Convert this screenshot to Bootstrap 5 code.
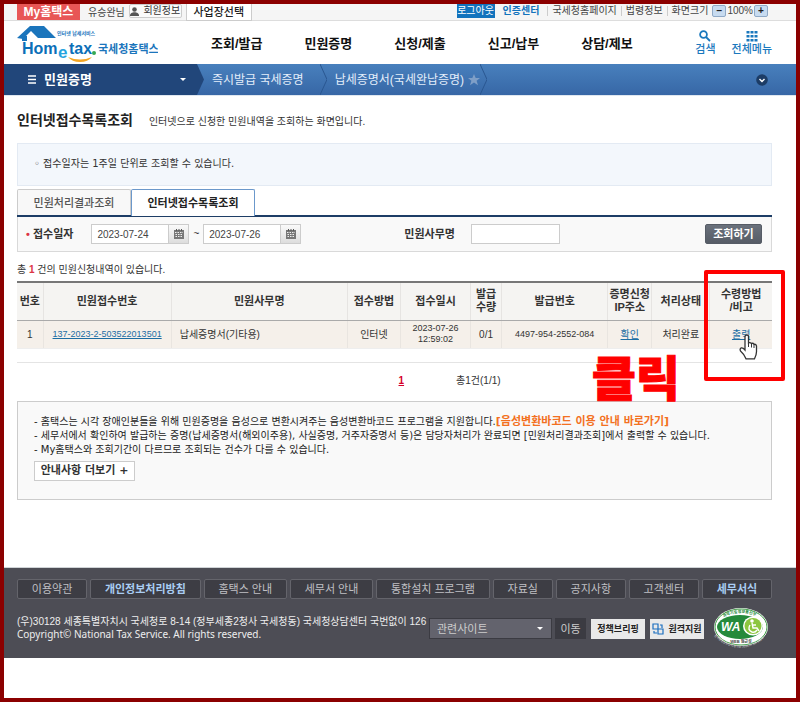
<!DOCTYPE html>
<html lang="ko">
<head>
<meta charset="utf-8">
<meta name="viewport" content="width=device-width, initial-scale=1">
<title>인터넷접수목록조회 - 국세청홈택스</title>
<link href="https://cdn.jsdelivr.net/npm/bootstrap@5.3.0/dist/css/bootstrap.min.css" rel="stylesheet">
<style>
body{font-family:"Liberation Sans","Noto Sans CJK KR",sans-serif;font-size:10px;line-height:14px;color:#333;border:4px solid #8b0000;min-height:100vh;background:#fff}
a{text-decoration:none;color:inherit}
button,input,select{font-family:inherit}
.gutter{padding-left:13px;padding-right:24px}
.topbar{background:#f5f5f5;border-bottom:1px solid #ddd;height:17px;color:#444}
.my-tab{background:#e85656;color:#fff;font-size:12px;font-weight:700;width:63px;text-align:center;line-height:16px}
.info-btn{border:1px solid #ccc;border-radius:2px;background:#fafafa;line-height:12px;width:53px;height:14px;color:#333}
.biz-btn{border:1px solid #ccc;border-top:0;background:#fff;font-size:11px;font-weight:500;width:66px;height:17px;line-height:14px;color:#222}
.logout{background:#1273bd;color:#fff;width:38px;height:14px;line-height:14px}
.cert-link{color:#1273bd;font-weight:700}
.sep{border-left:1px solid #ccc;padding-left:4px;line-height:10px}
.zoom-btn{border:1px solid #8fa9c6;border-radius:2px;background:#c7dbf0;width:14px;height:12px;line-height:8px;color:#222;font-weight:700}
.zoom-value{padding:0 1px}
.masthead{height:43px}
.gnb{gap:42px;font-size:13px;font-weight:700;color:#111;margin-left:53px;padding-top:2px}
.tool-link{color:#1a78bd;font-size:11px;font-weight:500}
.crumbs{background:linear-gradient(#4880bd,#3767a6);height:31px;color:#e4eefa;font-size:12px;border-bottom:1px solid #dfe7f0;box-sizing:content-box}
.crumb-main{background:#21467a;width:193px;color:#fff}
.crumb-main button,.crumb-main button:hover{color:#fff;font-size:13px;font-weight:700;width:100%;padding:0 11px 0 24px}
.crumb-mark{width:7px;height:31px;flex:none}
.page-main{padding-top:14px}
.page-title{font-size:14px;font-weight:700;line-height:20px;color:#222}
.hint{border:1px solid #e3eaf3;background:#f3f7fc;padding:13px 16px 14px;margin-top:13px;font-family:"DejaVu Sans","Noto Sans CJK KR",sans-serif}
.tab-btn{border:1px solid #ccc;border-bottom:0;border-radius:2px 2px 0 0;background:#f8f8f8;font-size:11px;font-weight:500;height:26px;line-height:24px;color:#555;width:114px}
.tab-btn.on{border-color:#6b98cb;background:#fff;font-weight:700;color:#222;width:124px;height:27px;margin-bottom:-1px}
.tab-row{border-bottom:2px solid #1d3d66;margin-top:3px}
.search-panel{border:1px solid #d9d9d9;border-top:0;background:#f9f9f9;height:35px;padding:0 9px 0 8px}
.search-panel label{font-size:11px;font-weight:700}
.from-label{margin-right:18px}
.task-label{margin-left:14%}
.field{border:1px solid #ccc;background:#fff;height:20px;width:78px;padding:0 5px;color:#444;border-radius:0}
.field-wide{width:89px}
.cal-btn{border:1px solid #ccc;border-left:0;background:linear-gradient(#fafafa,#ddd);width:20px;height:20px;line-height:0}
.find-btn{background:linear-gradient(#6a717c,#565c66);border:1px solid #565c66;border-radius:2px;color:#fff;font-size:11px;font-weight:700;width:57px;height:20px;line-height:17px}
.count-line{margin:11px 0 4px}
.results{border-top:2px solid #777;table-layout:fixed}
.results th{background:#f5f4f2;font-size:11px;line-height:13px;height:38px;padding:0;text-align:center;border-bottom:1px solid #aaa;border-right:1px solid #e6e4e2;font-weight:700;white-space:nowrap}
.results td{background:#f5f0ea;height:28px;line-height:11px;padding:0;text-align:center;border-right:1px solid #e9e5e0;border-bottom:1px solid #eee;white-space:nowrap}
.results tr>:last-child{border-right:0}
.results a{color:#1c6ea4;text-decoration:underline}
.results td.slim{font-size:9px}
.list-end{border-top:1px solid #e4e4e4;margin-top:13px;padding-top:11px}
.pager-num{color:#d4002a;font-weight:700;text-decoration:underline}
.focus-frame{position:absolute;border:4px solid #f00;border-radius:2px;width:81px;height:111px;right:-13px;top:-11px}
.click-word{position:absolute;right:92px;top:67px;font-family:"Noto Sans CJK KR",sans-serif;font-size:48px;line-height:54px;font-weight:900;color:#f00;-webkit-text-stroke:1px #f00}
.hand{position:absolute;right:14px;top:53px;width:19px;height:26px}
.notes{border:1px solid #ccc;background:#f9f9f9;padding:13px 16px 18px;margin-top:13px;color:#222;font-family:"DejaVu Sans","Noto Sans CJK KR",sans-serif}
.notes li::before{content:"- ";white-space:pre}
.orange{color:#f37021;font-size:11px;font-weight:700}
.more-btn{border:1px solid #ccc;background:#fff;font-size:11px;font-weight:700;width:101px;height:20px;line-height:17px;margin-top:4px;color:#333}
.foot{background:#4d4d55;border-top:1px solid #cfd3d6;margin-top:67px;height:91px;padding-top:11px;color:#eee}
.foot-nav{gap:3px}
.foot-nav a{flex:1 1 auto;text-align:center;background:#3d3d44;border:1px solid #64646b;border-radius:2px;font-size:11px;line-height:18px;color:#c0c0c4;white-space:nowrap}
.foot-nav a.hl{color:#a9cdf3;font-weight:700}
.foot-row{margin-top:9px;gap:5px}
.addr{line-height:12px;width:407px;white-space:nowrap}
.latin{font-family:"Noto Sans",sans-serif}
.site-pick{appearance:none;background:#63636d url("data:image/svg+xml,%3Csvg xmlns='http://www.w3.org/2000/svg' viewBox='0 0 6 3'%3E%3Cpath d='M0 0h6L3 3z' fill='%23fff'/%3E%3C/svg%3E") no-repeat right 8px center/6px 3px;border:1px solid #3b3b42;color:#ccc;font-size:11px;width:123px;height:21px;padding:0 7px}
.go-btn{background:#3b3b42;border:0;color:#ccc;font-size:11px;width:31px;height:21px;margin-left:-2px}
.chip-link{background:#e9e9e9;color:#222;width:54px;height:20px;line-height:20px;font-weight:700;font-size:9px;text-align:center;white-space:nowrap}
</style>
</head>
<body>
<header>
  <div class="topbar gutter d-flex align-items-start">
    <a href="#" class="my-tab">My홈택스</a>
    <span class="ps-2 pt-1 lh-1">유승완님</span>
    <button type="button" class="info-btn p-0 ms-1 d-flex align-items-center justify-content-center gap-1"><svg width="9" height="9" viewBox="0 0 9 9" fill="#555"><circle cx="4.500" cy="2.500" r="2.300"/><path d="M0 9V7.500Q1 5.500 3.500 5.300h2Q8 5.500 9 7.500V9z"/></svg>회원정보</button>
    <button type="button" class="biz-btn p-0 ms-1">사업장선택</button>
    <div class="ms-auto me-1 d-flex align-items-center">
      <a href="#" class="logout text-center">로그아웃</a>
      <a href="#" class="ms-2 me-2 cert-link">인증센터</a>
      <a href="#" class="sep me-1">국세청홈페이지</a>
      <a href="#" class="sep me-1">법령정보</a>
      <span class="sep me-1">화면크기</span>
      <button type="button" class="zoom-btn p-0" aria-label="축소">−</button>
      <span class="zoom-value">100%</span>
      <button type="button" class="zoom-btn p-0" aria-label="확대">+</button>
    </div>
  </div>
  <div class="masthead gutter d-flex align-items-center">
    <a href="#" aria-label="홈택스">
      <svg width="141" height="38" viewBox="0 0 141 38">
        <path d="M0 14 13 2h14l12 12H21l-7-7-8 8z" fill="#1b75bc"/><path d="M5 12h5v5H5z" fill="#1b75bc"/>
        <text x="40" y="11" font-size="5" fill="#1b75bc" font-weight="700">인터넷 납세서비스</text>
        <g fill="#0b6fb8" font-weight="700" font-size="16"><text x="5" y="30">Hom</text><text x="52" y="30">tax</text></g>
        <text x="41" y="34" font-size="17" font-weight="700" fill="#27a4df">e</text><circle cx="77" cy="29" r="2" fill="#35a853"/>
        <path d="M51 33q12 5 24 0-4 5-12 5-8 0-12-5z" fill="#f5a623"/>
        <text x="81" y="29" font-size="11" font-weight="700" fill="#1b75bc">국세청홈택스</text>
      </svg>
    </a>
    <nav class="gnb d-flex"><a href="#">조회/발급</a><a href="#">민원증명</a><a href="#">신청/제출</a><a href="#">신고/납부</a><a href="#">상담/제보</a></nav>
    <div class="ms-auto d-flex gap-3 text-center tool-link">
      <a href="#"><svg class="d-block mx-auto" width="12" height="12" viewBox="0 0 12 12" fill="none" stroke="#1a78bd" stroke-width="1.800"><circle cx="4.500" cy="4.500" r="3.400"/><path d="m7 7 4 4"/></svg>검색</a>
      <a href="#"><svg class="d-block mx-auto" width="12" height="12" viewBox="0 0 11 12" fill="#1a78bd"><path d="M0 1h3v2.500H0zM4 1h3v2.500H4zM8 1h3v2.500H8zM0 5h3v2.500H0zM4 5h3v2.500H4zM8 5h3v2.500H8zM0 9h3v2.500H0zM4 9h3v2.500H4zM8 9h3v2.500H8z"/></svg>전체메뉴</a>
    </div>
  </div>
  <nav class="crumbs d-flex align-items-center">
    <div class="crumb-main h-100"><button type="button" class="btn border-0 rounded-0 h-100 d-flex align-items-center"><svg width="8" height="9" viewBox="0 0 8 9" stroke="#fff" stroke-width="1.500"><path d="M0 1h8M0 4.500h8M0 8h8"/></svg><span class="ms-2">민원증명</span><svg class="ms-auto" width="6" height="3" viewBox="0 0 6 3" fill="#fff"><path d="M0 0h6L3 3z"/></svg></button></div>
    <svg class="crumb-mark" viewBox="0 0 7 31"><path d="M0 0 7 15.500 0 31z" fill="#21467a"/></svg>
    <a href="#" class="ms-2 me-3">즉시발급 국세증명</a>
    <svg class="crumb-mark me-2" viewBox="0 0 7 31" fill="none" stroke="#2a5791"><path d="M0 0 7 15.500 0 31"/></svg>
    <a href="#">납세증명서(국세완납증명)</a>
    <svg class="ms-1" width="12" height="12" viewBox="0 0 12 12" fill="#7f9fc7"><path d="m6 0 1.700 4H12L8.600 6.800 10 11.300 6 8.600 2 11.300 3.400 6.800 0 4h4.300z"/></svg>
    <svg class="crumb-mark" viewBox="0 0 7 31" fill="none" stroke="#2a5791"><path d="M0 0 7 15.500 0 31"/></svg>
    <button type="button" class="btn border-0 p-0 ms-auto me-4 lh-1" aria-label="펼치기"><svg class="me-1" width="12" height="12" viewBox="0 0 12 12"><circle cx="6" cy="6" r="5.800" fill="#1c3c66"/><path d="m3.500 5 2.500 2.500L8.500 5" fill="none" stroke="#fff" stroke-width="1.400"/></svg></button>
  </nav>
</header>

<main class="gutter page-main">
  <div class="d-flex align-items-center"><h1 class="page-title m-0">인터넷접수목록조회</h1><span class="ms-3 pt-1">인터넷으로 신청한 민원내역을 조회하는 화면입니다.</span></div>
  <div class="hint">◦ 접수일자는 1주일 단위로 조회할 수 있습니다.</div>
  <div class="tab-row d-flex align-items-end">
    <button type="button" class="tab-btn p-0">민원처리결과조회</button>
    <button type="button" class="tab-btn on p-0">인터넷접수목록조회</button>
  </div>
  <form class="search-panel d-flex align-items-center">
    <label for="from" class="from-label"><span class="text-danger">•</span> 접수일자</label>
    <input id="from" class="field" value="2023-07-24"><button type="button" class="cal-btn p-0" aria-label="시작일 달력"><svg width="10" height="10" viewBox="0 0 10 10"><path d="M0 1h10v9H0z" fill="#777"/><path d="M1 3.500h8M1.500 5.500h7M1.500 7.500h7" stroke="#eee" stroke-dasharray="1.500 1"/><path d="M2.500 0v2M5 0v2M7.500 0v2" stroke="#555"/></svg></button>
    <span class="px-1 text-center">~</span>
    <input id="to" class="field" aria-label="종료일" value="2023-07-26"><button type="button" class="cal-btn p-0" aria-label="종료일 달력"><svg width="10" height="10" viewBox="0 0 10 10"><path d="M0 1h10v9H0z" fill="#777"/><path d="M1 3.500h8M1.500 5.500h7M1.500 7.500h7" stroke="#eee" stroke-dasharray="1.500 1"/><path d="M2.500 0v2M5 0v2M7.500 0v2" stroke="#555"/></svg></button>
    <label for="task" class="task-label me-3">민원사무명</label>
    <input id="task" class="field field-wide">
    <button type="button" class="find-btn p-0 ms-auto">조회하기</button>
  </form>

  <p class="count-line">총 <b class="text-danger">1</b> 건의 민원신청내역이 있습니다.</p>
  <div class="position-relative">
    <table class="results w-100">
      <colgroup><col width="26"><col width="128"><col width="176"><col width="53"><col width="70"><col width="31"><col width="106"><col width="44"><col width="58"><col width="62"></colgroup>
      <thead><tr><th>번호</th><th>민원접수번호</th><th>민원사무명</th><th>접수방법</th><th>접수일시</th><th>발급<br>수량</th><th>발급번호</th><th>증명신청<br>IP주소</th><th>처리상태</th><th>수령방법<br>/비고</th></tr></thead>
      <tbody><tr><td>1</td><td class="slim"><a href="#">137-2023-2-503522013501</a></td><td class="text-start ps-2">납세증명서(기타용)</td><td>인터넷</td><td class="slim">2023-07-26<br>12:59:02</td><td>0/1</td><td class="slim">4497-954-2552-084</td><td><a href="#">확인</a></td><td>처리완료</td><td><a href="#">출력</a></td></tr></tbody>
    </table>
    <div class="focus-frame"></div>
    <svg class="hand" viewBox="0 0 19 26"><path d="M6 14V3q0-2 1.800-2T9.500 3v6q1.500-1 3 .500 1.500-.800 2.500.800 2-.300 2.500 1.500v6q0 3-2 7H7Q5 20 1.500 17q-1-2 .500-3 2-.500 4 2z" fill="#fff" stroke="#333" stroke-width="1.300"/><path d="M9.500 9v4M12.500 10v3.500M15 11v3" stroke="#333"/></svg>
    <div class="click-word">클릭</div>
  </div>
  <div class="list-end row g-0"><div class="col-6 offset-6 ps-1"><a href="#" class="pager-num">1</a><span class="ms-5 ps-1">총1건(1/1)</span></div></div>

  <section class="notes">
    <ul class="list-unstyled m-0">
      <li>홈택스는 시각 장애인분들을 위해 민원증명을 음성으로 변환시켜주는 음성변환바코드 프로그램을 지원합니다.<a href="#" class="orange">[음성변환바코드 이용 안내 바로가기]</a></li>
      <li>세무서에서 확인하여 발급하는 증명(납세증명서(해외이주용), 사실증명, 거주자증명서 등)은 담당자처리가 완료되면 [민원처리결과조회]에서 출력할 수 있습니다.</li>
      <li>My홈택스와 조회기간이 다르므로 조회되는 건수가 다를 수 있습니다.</li>
    </ul>
    <button type="button" class="more-btn p-0">안내사항 더보기 +</button>
  </section>
</main>

<footer class="foot gutter">
  <nav class="foot-nav d-flex"><a href="#">이용약관</a><a href="#" class="hl">개인정보처리방침</a><a href="#">홈택스 안내</a><a href="#">세무서 안내</a><a href="#">통합설치 프로그램</a><a href="#">자료실</a><a href="#">공지사항</a><a href="#">고객센터</a><a href="#" class="hl">세무서식</a></nav>
  <div class="foot-row d-flex align-items-center">
    <address class="addr m-0">(우)30128 세종특별자치시 국세청로 8-14 (정부세종2청사 국세청동) 국세청상담센터 국번없이 126<br><span class="latin">Copyright© National Tax Service. All rights reserved.</span></address>
    <select class="site-pick" aria-label="관련사이트"><option>관련사이트</option></select>
    <button type="button" class="go-btn p-0">이동</button>
    <a href="#" class="chip-link">정책브리핑</a>
    <a href="#" class="chip-link d-flex align-items-center justify-content-center"><svg class="me-1" width="12" height="12" viewBox="0 0 12 12" fill="none" stroke="#1b6fc0" stroke-width="1.200"><path d="M1 1h5v5H1zM6 6h5v5H6zM8 2h2v3M2 8v2h3"/></svg>원격지원</a>
    <svg class="ms-1" width="56" height="42" viewBox="0 0 56 42">
      <defs><path id="arcTop" d="M6 17C8 1 48 1 50 17"/><path id="arcLow" d="M1 28Q28 52 55 27"/></defs>
      <ellipse cx="28" cy="19" rx="27" ry="19" fill="#fff"/><ellipse cx="28" cy="19" rx="26" ry="18" fill="none" stroke="#3e9b45"/>
      <ellipse cx="27" cy="19" rx="23" ry="12" fill="#258a3b"/><ellipse cx="40" cy="18" rx="10" ry="9.500" fill="#fff"/><ellipse cx="40" cy="18" rx="8.500" ry="8" fill="#8dc63f"/>
      <circle cx="39" cy="13" r="1.800" fill="#fff"/><path d="m39 15 1 5h4l2 3M37 17q-3 5 2 7 3 1 5-2M39 17h4" stroke="#fff" stroke-width="1.400" fill="none"/>
      <text x="8" y="23" font-size="12" font-weight="700" font-style="italic" fill="#fff">WA</text>
      <text font-size="4" font-weight="700" fill="#258a3b"><textPath href="#arcTop" startOffset="9">과학기술정보통신부</textPath></text>
      <text x="28" y="35" font-size="4" text-anchor="middle" font-weight="700" fill="#444">WEB 접근성</text>
      <text font-size="3" fill="#ddd"><textPath href="#arcLow">한국웹접근성인증평가원 2023.07.01~2024</textPath></text>
    </svg>
  </div>
</footer>
<script src="https://cdn.jsdelivr.net/npm/bootstrap@5.3.0/dist/js/bootstrap.bundle.min.js"></script>
</body>
</html>
